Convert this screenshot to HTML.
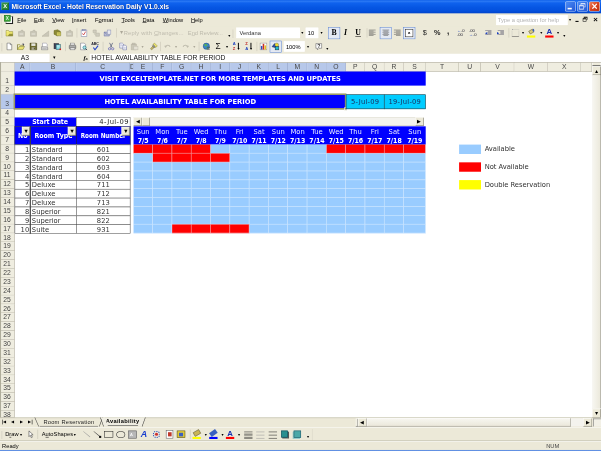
<!DOCTYPE html><html><head><meta charset="utf-8"><title>Microsoft Excel - Hotel Reservation Daily V1.0.xls</title><style>
*{box-sizing:border-box;margin:0;padding:0}
html,body{width:601px;height:451px;overflow:hidden;background:#ECE9D8}
#root{position:absolute;left:0;top:0;width:1152px;height:864px;transform-origin:0 0;transform:scale(0.52170,0.52199);background:#ECE9D8;overflow:hidden;font-family:"Liberation Sans",sans-serif;font-size:11px;color:#000;filter:blur(0.5px)}
#root div{position:absolute;white-space:nowrap}
.v{font-family:"DejaVu Sans","Liberation Sans",sans-serif}
.w{color:#fff}
.b{font-weight:bold}
.c{text-align:center}
.r{text-align:right}
.ch{background:#EFEDE0;border-right:1px solid #ACA899;border-bottom:1px solid #ACA899;text-align:center;font-size:13px;line-height:16px;color:#444}
.chs{background:#B7C8EA;border-right:1px solid #8C9DC4;border-bottom:1px solid #8C9DC4}
.rh{background:#EFEDE0;border-right:1px solid #ACA899;border-bottom:1px solid #ACA899;text-align:center;font-size:13px;color:#444}
.rhs{background:#B7C8EA;border-bottom:1px solid #8C9DC4}
.sep{width:1px;height:18px;background:#C5C2B2}
.grip{width:3px;height:18px;border-left:1px dotted #A6A398;}
.dd{font-size:7px;line-height:7px;color:#000}
.ic{width:16px;height:16px}
</style></head><body><div id="root">
<div style="left:0px;top:0px;width:1152px;height:26px;background:linear-gradient(#0A5CE8 0%,#2D7BF5 8%,#0F62EE 22%,#0656E3 55%,#0450DD 80%,#0042C8 100%)"></div>
<div style="left:3px;top:5px;width:14px;height:14px;background:#2B8A38;border:1px solid #8CCB95;border-right-color:#1B5E26;border-bottom-color:#1B5E26"></div>
<div style="left:3px;top:5px;width:14px;height:14px;color:#fff;font-weight:bold;font-size:11px;line-height:14px;text-align:center">X</div>
<div style="left:22px;top:5px;width:400px;height:16px;color:#fff;font-weight:bold;font-size:13px;line-height:16px;font-family:'Liberation Sans',sans-serif;letter-spacing:-0.06px;text-shadow:1px 1px 0 #0A2A80">Microsoft Excel - Hotel Reservation Daily V1.0.xls</div>
<div style="left:1083px;top:3px;width:21px;height:19px;background:linear-gradient(135deg,#4C8DF5,#2358D8);border:1px solid rgba(255,255,255,0.75);border-radius:3px"></div>
<div style="left:1088px;top:15px;width:8px;height:3px;background:#fff"></div>
<div style="left:1106px;top:3px;width:21px;height:19px;background:linear-gradient(135deg,#4C8DF5,#2358D8);border:1px solid rgba(255,255,255,0.75);border-radius:3px"></div>
<div style="left:1113px;top:6px;width:9px;height:8px;border:1px solid #fff;border-top:2px solid #fff"></div><div style="left:1110px;top:10px;width:9px;height:8px;border:1px solid #fff;border-top:2px solid #fff;background:#2F66DE"></div>
<div style="left:1129px;top:3px;width:21px;height:19px;background:linear-gradient(135deg,#EE8866,#D8431F 50%,#C03010);border:1px solid rgba(255,255,255,0.75);border-radius:3px"></div>
<div style="left:1129px;top:3px;width:21px;height:19px;color:#fff;font-weight:bold;font-size:20px;line-height:18px;text-align:center">&#215;</div>
<div style="left:0px;top:26px;width:1152px;height:24px;background:#ECE9D8"></div>
<div style="left:2px;top:30px;width:3px;height:17px;border-left:1px dotted #A6A398"></div>
<div style="left:11px;top:31px;width:14px;height:15px;background:#fff;border:1px solid #666;border-right:2px solid #222;border-bottom:2px solid #222"></div>
<div style="left:8px;top:29px;width:12px;height:12px;background:#3DA83D;border:1px solid #1C6E1C"></div>
<div style="left:8px;top:29px;width:12px;height:12px;color:#DFF5DF;font-weight:bold;font-size:9px;line-height:12px;text-align:center">X</div>
<div style="left:33px;top:31px;width:60px;height:15px;font-size:11px;line-height:15px"><u>F</u>ile</div>
<div style="left:65px;top:31px;width:60px;height:15px;font-size:11px;line-height:15px"><u>E</u>dit</div>
<div style="left:100px;top:31px;width:60px;height:15px;font-size:11px;line-height:15px"><u>V</u>iew</div>
<div style="left:138px;top:31px;width:60px;height:15px;font-size:11px;line-height:15px"><u>I</u>nsert</div>
<div style="left:182px;top:31px;width:60px;height:15px;font-size:11px;line-height:15px">F<u>o</u>rmat</div>
<div style="left:233px;top:31px;width:60px;height:15px;font-size:11px;line-height:15px"><u>T</u>ools</div>
<div style="left:273px;top:31px;width:60px;height:15px;font-size:11px;line-height:15px"><u>D</u>ata</div>
<div style="left:312px;top:31px;width:60px;height:15px;font-size:11px;line-height:15px"><u>W</u>indow</div>
<div style="left:366px;top:31px;width:60px;height:15px;font-size:11px;line-height:15px"><u>H</u>elp</div>
<div style="left:951px;top:29px;width:137px;height:19px;background:#fff;border:1px solid #fff;color:#B4B4B4;font-size:11px;line-height:17px;padding-left:2px">Type a question for help</div>
<div style="left:1089px;top:34px;width:8px;height:8px;font-size:7px;line-height:8px">&#9660;</div>
<div style="left:1103px;top:40px;width:6px;height:2px;background:#000"></div>
<div style="left:1119px;top:32px;width:7px;height:6px;border:1px solid #000;border-top:2px solid #000"></div>
<div style="left:1117px;top:35px;width:7px;height:6px;border:1px solid #000;border-top:2px solid #000;background:#ECE9D8"></div>
<div style="left:1137px;top:29px;width:14px;height:16px;font-size:15px;line-height:16px;font-weight:bold">&#215;</div>
<div style="left:0px;top:50px;width:1152px;height:26px;background:#ECE9D8"></div>
<div class="grip" style="left:3px;top:54px;width:3px;height:18px;"></div>
<svg style="position:absolute;left:10px;top:55px" width="16" height="16" viewBox="0 0 16 16"><path d="M1.5 3.5h5l1 2h7v8.5h-13z" fill="#F0E870" stroke="#8C8A36"/><path d="M8 9.5h6.5v4.5H5z" fill="#85832F" opacity=".85"/><path d="M2.5 5h4" stroke="#FFFBC0"/></svg>
<svg style="position:absolute;left:33px;top:55px" width="16" height="16" viewBox="0 0 16 16"><path d="M2.500 5.500h4l1-2.500h3.500v2.500h3v9h-11.500z" fill="#CAC7B8" stroke="#B3B0A1"/><path d="M4.500 8.500h7v3h-7z" fill="#DEDBCF"/></svg>
<svg style="position:absolute;left:56px;top:55px" width="16" height="16" viewBox="0 0 16 16"><path d="M2.500 5.500h4l1-2.500h3.500v2.500h3v9h-11.500z" fill="#CAC7B8" stroke="#B3B0A1"/><path d="M4.500 8.500h7v3h-7z" fill="#DEDBCF"/></svg>
<svg style="position:absolute;left:79px;top:55px" width="16" height="16" viewBox="0 0 16 16"><path d="M1.500 14.500L14.500 4.500v10z" fill="#CAC7B8" stroke="#B3B0A1"/></svg>
<svg style="position:absolute;left:102px;top:55px" width="16" height="16" viewBox="0 0 16 16"><path d="M1.500 3.500l7-1.500 5 3v6l-6 2.500-6-3z" fill="#8C8A36" stroke="#6E6C28"/><path d="M6.500 6.500h8v7h-8z" fill="#F0E870" stroke="#6E6C28"/><path d="M8 8.500h5M8 10.500h5" stroke="#8C8A36"/></svg>
<svg style="position:absolute;left:125px;top:55px" width="16" height="16" viewBox="0 0 16 16"><path d="M2.500 5.500h4l1-2.500h3.500v2.500h3v9h-11.500z" fill="#CAC7B8" stroke="#B3B0A1"/><path d="M4.500 8.500h7v3h-7z" fill="#DEDBCF"/></svg>
<div class="sep" style="left:147px;top:54px;width:1px;height:18px;"></div>
<svg style="position:absolute;left:153px;top:55px" width="16" height="16" viewBox="0 0 16 16"><rect x="2.500" y="2.500" width="11" height="12" fill="#fff" stroke="#7880A8"/><rect x="5.500" y="1.500" width="5" height="2.500" fill="#B8BCD0" stroke="#7880A8"/><path d="M5 9l2.200 3 4-6.500" stroke="#C83030" stroke-width="1.500" fill="none"/></svg>
<svg style="position:absolute;left:176px;top:55px" width="16" height="16" viewBox="0 0 16 16"><path d="M2.500 2.500h6v5h-6zM7.500 8.500h7v6h-7z" fill="#D0CDBF" stroke="#B3B0A1"/><path d="M5 8v3h2" stroke="#BDBAAB" fill="none"/></svg>
<svg style="position:absolute;left:198px;top:55px" width="16" height="16" viewBox="0 0 16 16"><path d="M1.500 6.500h10v7.500h-10z" fill="#B8BCD4" stroke="#6870A0"/><path d="M1.500 6.500l5 4 5-4" fill="none" stroke="#6870A0"/><rect x="7.500" y="2.500" width="7" height="8" fill="#E8E8F0" stroke="#8890B0"/></svg>
<div class="sep" style="left:223px;top:54px;width:1px;height:18px;"></div>
<div style="left:228px;top:56px;width:10px;height:14px;font-size:10px;line-height:14px;color:#ACA899">&#9660;</div>
<div style="left:237px;top:56px;width:120px;height:15px;font-size:11px;line-height:15px;color:#BDBAAC;letter-spacing:0.4px">Reply with <u>C</u>hanges...</div>
<div style="left:360px;top:56px;width:80px;height:15px;font-size:11px;line-height:15px;color:#BDBAAC">E<u>n</u>d Review...</div>
<div style="left:436px;top:64px;width:7px;height:7px;font-size:7px;line-height:7px;color:#000">&#9660;</div>
<div class="grip" style="left:446px;top:54px;width:3px;height:18px;"></div>
<div style="left:453px;top:53px;width:122px;height:20px;background:#fff;border:1px solid #fff;font-size:11px;line-height:18px;padding-left:5px;color:#333">Verdana</div>
<div style="left:576px;top:60px;width:7px;height:7px;font-size:7px;line-height:7px;color:#000">&#9660;</div>
<div style="left:586px;top:53px;width:24px;height:20px;background:#fff;border:1px solid #fff;font-size:11px;line-height:18px;padding-left:3px">10</div>
<div style="left:613px;top:60px;width:7px;height:7px;font-size:7px;line-height:7px;color:#000">&#9660;</div>
<div style="left:629px;top:52px;width:23px;height:23px;background:#E4E9F3;border:1px solid #5F86CF"></div>
<div style="left:629px;top:52px;width:23px;height:23px;font-family:'Liberation Serif',serif;font-weight:bold;font-size:15px;line-height:22px;text-align:center">B</div>
<div style="left:651px;top:52px;width:23px;height:23px;font-family:'Liberation Serif',serif;font-style:italic;font-weight:bold;font-size:15px;line-height:22px;text-align:center">I</div>
<div style="left:675px;top:52px;width:23px;height:23px;font-family:'Liberation Serif',serif;font-weight:bold;font-size:15px;line-height:22px;text-align:center;text-decoration:underline">U</div>
<div class="sep" style="left:703px;top:54px;width:1px;height:18px;"></div>
<div style="left:707px;top:57px;width:13px;height:1px;background:#555"></div>
<div style="left:707px;top:59px;width:9px;height:1px;background:#555"></div>
<div style="left:707px;top:61px;width:13px;height:1px;background:#555"></div>
<div style="left:707px;top:63px;width:9px;height:1px;background:#555"></div>
<div style="left:707px;top:65px;width:13px;height:1px;background:#555"></div>
<div style="left:707px;top:67px;width:9px;height:1px;background:#555"></div>
<div style="left:728px;top:52px;width:23px;height:23px;background:#E4E9F3;border:1px solid #5F86CF"></div>
<div style="left:733px;top:57px;width:13px;height:1px;background:#555"></div>
<div style="left:735px;top:59px;width:9px;height:1px;background:#555"></div>
<div style="left:733px;top:61px;width:13px;height:1px;background:#555"></div>
<div style="left:735px;top:63px;width:9px;height:1px;background:#555"></div>
<div style="left:733px;top:65px;width:13px;height:1px;background:#555"></div>
<div style="left:735px;top:67px;width:9px;height:1px;background:#555"></div>
<div style="left:755px;top:57px;width:13px;height:1px;background:#555"></div>
<div style="left:759px;top:59px;width:9px;height:1px;background:#555"></div>
<div style="left:755px;top:61px;width:13px;height:1px;background:#555"></div>
<div style="left:759px;top:63px;width:9px;height:1px;background:#555"></div>
<div style="left:755px;top:65px;width:13px;height:1px;background:#555"></div>
<div style="left:759px;top:67px;width:9px;height:1px;background:#555"></div>
<div style="left:773px;top:52px;width:23px;height:23px;background:#E4E9F3;border:1px solid #5F86CF"></div>
<div style="left:777px;top:56px;width:15px;height:15px;border:1px solid #222;background:#fff"></div>
<div style="left:780px;top:61px;width:9px;height:5px;font-size:8px;line-height:5px;font-weight:bold;text-align:center">a</div>
<div style="left:806px;top:54px;width:16px;height:18px;font-size:14px;line-height:18px;text-align:center;color:#222">$</div>
<div style="left:828px;top:54px;width:20px;height:18px;font-size:14px;line-height:18px;font-weight:bold;text-align:center;color:#222">%</div>
<div style="left:857px;top:52px;width:10px;height:18px;font-size:16px;line-height:18px;font-weight:bold;color:#222">,</div>
<div style="left:876px;top:55px;width:20px;height:16px;font-size:8px;line-height:8px;color:#223"><span style="color:#1A3FBF">&#8592;</span>.0<br>.00</div>
<div style="left:899px;top:55px;width:20px;height:16px;font-size:8px;line-height:8px;color:#223">.00<br><span style="color:#1A3FBF">&#8594;</span>.0</div>
<div style="left:930px;top:58px;width:12px;height:1px;background:#667"></div>
<div style="left:935px;top:60px;width:7px;height:1px;background:#667"></div>
<div style="left:935px;top:62px;width:7px;height:1px;background:#667"></div>
<div style="left:935px;top:64px;width:7px;height:1px;background:#667"></div>
<div style="left:930px;top:66px;width:12px;height:1px;background:#667"></div>
<div style="left:929px;top:60px;width:5px;height:6px;font-size:6px;line-height:6px;color:#1A3FBF">&#9664;</div>
<div style="left:954px;top:58px;width:12px;height:1px;background:#667"></div>
<div style="left:959px;top:60px;width:7px;height:1px;background:#667"></div>
<div style="left:959px;top:62px;width:7px;height:1px;background:#667"></div>
<div style="left:959px;top:64px;width:7px;height:1px;background:#667"></div>
<div style="left:954px;top:66px;width:12px;height:1px;background:#667"></div>
<div style="left:953px;top:60px;width:5px;height:6px;font-size:6px;line-height:6px;color:#1A3FBF">&#9654;</div>
<div class="sep" style="left:975px;top:54px;width:1px;height:18px;"></div>
<div style="left:981px;top:56px;width:14px;height:14px;border:1px dotted #AAA;border-bottom:1px solid #444"></div>
<div style="left:999px;top:60px;width:7px;height:7px;font-size:7px;line-height:7px;color:#000">&#9660;</div>
<div style="left:1014px;top:57px;width:9px;height:7px;background:#D8C878;border:1px solid #665;transform:rotate(-30deg)"></div>
<div style="left:1021px;top:55px;width:3px;height:6px;background:#3A5FBF;border-radius:50%"></div>
<div style="left:1010px;top:68px;width:16px;height:4px;background:#FFFF00"></div>
<div style="left:1034px;top:60px;width:7px;height:7px;font-size:7px;line-height:7px;color:#000">&#9660;</div>
<div style="left:1044px;top:52px;width:18px;height:18px;font-size:15px;line-height:17px;font-weight:bold;text-align:center;color:#1A2FAF">A</div>
<div style="left:1045px;top:68px;width:16px;height:4px;background:#FF0000"></div>
<div style="left:1066px;top:60px;width:7px;height:7px;font-size:7px;line-height:7px;color:#000">&#9660;</div>
<div style="left:1078px;top:64px;width:7px;height:7px;font-size:7px;line-height:7px;color:#000">&#9660;</div>
<div style="left:0px;top:76px;width:1152px;height:26px;background:#ECE9D8"></div>
<div class="grip" style="left:3px;top:80px;width:3px;height:18px;"></div>
<svg style="position:absolute;left:10px;top:81px" width="16" height="16" viewBox="0 0 16 16"><path d="M3.500 1.500h6l3 3v10h-9z" fill="#fff" stroke="#555"/><path d="M9.500 1.500v3h3" fill="#DDD" stroke="#555"/></svg>
<svg style="position:absolute;left:32px;top:81px" width="16" height="16" viewBox="0 0 16 16"><path d="M1.5 4.5h4.5l1 1.5h6v2" fill="#E8E070" stroke="#7E7C30"/><path d="M1.5 4.5v9.5h10.5l3-6H5l-3.5 6z" fill="#E8E070" stroke="#7E7C30"/><path d="M10 3.5c2-2 4-1 4 1l1-.5-1.5 2.5-2-2 1 .3c0-1-1-1.6-2.500-.3z" fill="#445"/></svg>
<svg style="position:absolute;left:56px;top:81px" width="16" height="16" viewBox="0 0 16 16"><path d="M1.500 1.500h12l1 1v12h-13z" fill="#6C6A2C" stroke="#3C3A18"/><rect x="4" y="2" width="8" height="5" fill="#E4E4DC"/><rect x="4.500" y="9.500" width="7" height="5" fill="#A8A690"/><rect x="9" y="10.500" width="1.500" height="3" fill="#3C3A18"/></svg>
<svg style="position:absolute;left:78px;top:81px" width="16" height="16" viewBox="0 0 16 16"><path d="M3.500 1.500h7l2 2v8h-9z" fill="#fff" stroke="#889"/><path d="M1.500 8.500h9l3 2v4h-12z" fill="#D8D8D8" stroke="#777"/><path d="M3 11.500h8" stroke="#999"/></svg>
<svg style="position:absolute;left:102px;top:81px" width="16" height="16" viewBox="0 0 16 16"><rect x="1.500" y="2.500" width="9" height="10" fill="#445" stroke="#223"/><rect x="5.500" y="4.500" width="8" height="9" fill="#7FD8E0" stroke="#256"/><path d="M7 7h5M7 9h5" stroke="#fff"/><rect x="12" y="12" width="3" height="3" fill="#D02020"/></svg>
<div class="sep" style="left:125px;top:80px;width:1px;height:18px;"></div>
<svg style="position:absolute;left:131px;top:81px" width="16" height="16" viewBox="0 0 16 16"><rect x="4.500" y="1.500" width="7" height="5" fill="#F4F4F4" stroke="#777"/><rect x="1.500" y="5.500" width="13" height="7" rx="1.500" fill="#9C9C9C" stroke="#5C5C5C"/><rect x="3.500" y="10.500" width="9" height="4" fill="#E4E4E4" stroke="#777"/><path d="M3 7.500h10" stroke="#C8C8C8"/></svg>
<svg style="position:absolute;left:152px;top:81px" width="16" height="16" viewBox="0 0 16 16"><path d="M2.500 1.500h7l2.500 2.500v10.500h-9.500z" fill="#fff" stroke="#667"/><circle cx="10" cy="10" r="3" fill="#A8E4E8" stroke="#2A7A8A" stroke-width="1.300"/><path d="M12.300 12.300l2.700 2.700" stroke="#345" stroke-width="1.800"/></svg>
<div style="left:175px;top:80px;width:16px;height:9px;font-size:7px;line-height:9px;font-weight:bold;color:#223;letter-spacing:-0.3px">ABC</div>
<svg style="position:absolute;left:175px;top:81px" width="16" height="16" viewBox="0 0 16 16"><path d="M4 10l3 4.500 6-8" stroke="#2A4AC8" stroke-width="2.200" fill="none"/></svg>
<div class="sep" style="left:197px;top:80px;width:1px;height:18px;"></div>
<svg style="position:absolute;left:205px;top:81px" width="16" height="16" viewBox="0 0 16 16"><path d="M5 1l4.500 9M11 1L6.500 10" stroke="#505878" stroke-width="1.400" fill="none"/><circle cx="5" cy="12.500" r="2.200" fill="none" stroke="#6C6CB8" stroke-width="1.500"/><circle cx="11" cy="12.500" r="2.200" fill="none" stroke="#6C6CB8" stroke-width="1.500"/></svg>
<svg style="position:absolute;left:228px;top:81px" width="16" height="16" viewBox="0 0 16 16"><path d="M1.500 1.500h5l2 2v7.500h-7z" fill="#fff" stroke="#5A64A0"/><path d="M7.500 5.500h5l2 2v7h-7z" fill="#fff" stroke="#5A64A0"/><path d="M3 5h3.500M3 7h3M9 9.500h4M9 11.500h4" stroke="#98A0C8"/></svg>
<svg style="position:absolute;left:250px;top:81px" width="16" height="16" viewBox="0 0 16 16"><path d="M1.500 3.500h10v11h-10z" fill="#CAC7B8" stroke="#B3B0A1"/><rect x="4" y="1.500" width="5" height="3" fill="#C8C5B7" stroke="#B5B2A3"/><rect x="6.500" y="7.500" width="8" height="7" fill="#E4E1D5" stroke="#BDBAAB"/></svg>
<div style="left:270px;top:86px;width:7px;height:7px;font-size:7px;line-height:7px;color:#ACA899">&#9660;</div>
<svg style="position:absolute;left:287px;top:81px" width="16" height="16" viewBox="0 0 16 16"><path d="M9 1.500l5.500 5.500-3 3-5.500-5.500z" fill="#F0E870" stroke="#8C8A36"/><path d="M7 5l3.500 3.500-2 2L5 7z" fill="#9A9A9A" stroke="#555"/><path d="M5.500 8l2.500 2.500-4.500 4-2-2z" fill="#C8B870" stroke="#6E6C28"/></svg>
<div class="sep" style="left:307px;top:80px;width:1px;height:18px;"></div>
<svg style="position:absolute;left:313px;top:81px" width="16" height="16" viewBox="0 0 16 16"><path d="M4 9c0-4 8-5 9 0" fill="none" stroke="#C0BDAE" stroke-width="2"/><path d="M1.500 6.500l3 4.500 2.500-4z" fill="#C0BDAE"/></svg>
<div style="left:334px;top:86px;width:7px;height:7px;font-size:7px;line-height:7px;color:#ACA899">&#9660;</div>
<svg style="position:absolute;left:348px;top:81px" width="16" height="16" viewBox="0 0 16 16"><path d="M12 9c0-4-8-5-9 0" fill="none" stroke="#C0BDAE" stroke-width="2"/><path d="M14.500 6.500l-3 4.500-2.500-4z" fill="#C0BDAE"/></svg>
<div style="left:369px;top:86px;width:7px;height:7px;font-size:7px;line-height:7px;color:#ACA899">&#9660;</div>
<div class="sep" style="left:381px;top:80px;width:1px;height:18px;"></div>
<svg style="position:absolute;left:388px;top:81px" width="16" height="16" viewBox="0 0 16 16"><circle cx="7.500" cy="7.500" r="6" fill="#3C86C6" stroke="#1D4E86"/><path d="M4 4c2-1.500 4-1 5 .5s-1 3-3 3-3-2-2-3.500zM8 9.500c1.500-.5 3 0 3 1.500s-2 2-3 1z" fill="#58B058"/><path d="M8.500 10.500c2-1.500 4-1.500 6 0M8.500 12.500c2 1.500 4 1.500 6 0" stroke="#444" stroke-width="1.400" fill="none"/></svg>
<div style="left:410px;top:80px;width:16px;height:18px;font-size:16px;line-height:18px;text-align:center;color:#111">&#931;</div>
<div style="left:432px;top:86px;width:7px;height:7px;font-size:7px;line-height:7px;color:#000">&#9660;</div>
<div style="left:446px;top:80px;width:8px;height:9px;font-size:8px;line-height:9px;font-weight:bold;color:#1A3FBF">A</div>
<div style="left:446px;top:88px;width:8px;height:9px;font-size:8px;line-height:9px;font-weight:bold;color:#B22">Z</div>
<div style="left:456px;top:82px;width:2px;height:11px;background:#111"></div>
<div style="left:454px;top:91px;width:6px;height:5px;font-size:7px;line-height:5px">&#9660;</div>
<div style="left:470px;top:80px;width:8px;height:9px;font-size:8px;line-height:9px;font-weight:bold;color:#B22">Z</div>
<div style="left:470px;top:88px;width:8px;height:9px;font-size:8px;line-height:9px;font-weight:bold;color:#1A3FBF">A</div>
<div style="left:480px;top:82px;width:2px;height:11px;background:#111"></div>
<div style="left:478px;top:91px;width:6px;height:5px;font-size:7px;line-height:5px">&#9660;</div>
<div class="sep" style="left:492px;top:80px;width:1px;height:18px;"></div>
<svg style="position:absolute;left:497px;top:81px" width="16" height="16" viewBox="0 0 16 16"><rect x="1.500" y="1.500" width="13" height="13" fill="#fff" stroke="#888"/><rect x="3" y="7" width="3" height="7" fill="#2A4FBF"/><rect x="6.500" y="3" width="3" height="11" fill="#C83028"/><rect x="10" y="6" width="3" height="8" fill="#E8C020"/></svg>
<div style="left:517px;top:78px;width:23px;height:23px;background:#E4E9F3;border:1px solid #5F86CF"></div>
<svg style="position:absolute;left:520px;top:81px" width="16" height="16" viewBox="0 0 16 16"><path d="M1.500 8.500l5-6 3 8z" fill="#2A4FBF" stroke="#123"/><circle cx="10.500" cy="5" r="3.500" fill="#F0E030" stroke="#776"/><rect x="7.500" y="8.500" width="7" height="6" fill="#20B8C8" stroke="#134"/></svg>
<div style="left:544px;top:79px;width:40px;height:20px;background:#fff;border:1px solid #fff;font-size:11px;line-height:18px;padding-left:3px">100%</div>
<div style="left:587px;top:86px;width:7px;height:7px;font-size:7px;line-height:7px;color:#000">&#9660;</div>
<svg style="position:absolute;left:603px;top:81px" width="16" height="16" viewBox="0 0 16 16"><path d="M2.500 2.500h11v9h-5l-3 3v-3h-3z" fill="#fff" stroke="#555"/></svg>
<div style="left:604px;top:81px;width:14px;height:13px;font-size:10px;line-height:13px;font-weight:bold;text-align:center;color:#333">?</div>
<div style="left:624px;top:90px;width:7px;height:7px;font-size:7px;line-height:7px;color:#000">&#9660;</div>
<div style="left:0px;top:102px;width:1152px;height:18px;background:#ECE9D8"></div>
<div style="left:0px;top:103px;width:95px;height:16px;background:#fff;text-align:center;font-size:13px;line-height:15px;color:#111">A3</div>
<div style="left:100px;top:107px;width:9px;height:8px;font-size:8px;line-height:8px">&#9660;</div>
<div style="left:160px;top:103px;width:14px;height:16px;font-family:'Liberation Serif',serif;font-style:italic;font-weight:bold;font-size:12px;line-height:15px">f<span style="font-size:9px">x</span></div>
<div style="left:172px;top:103px;width:980px;height:16px;background:#fff;font-size:13px;line-height:15px;padding-left:3px;color:#111">HOTEL AVAILABILITY TABLE FOR PERIOD</div>
<div style="left:0px;top:120px;width:1135px;height:680px;background:#fff"></div>
<div class="ch" style="left:0px;top:120px;width:28px;height:17px;"></div>
<div class="ch chs" style="left:28px;top:120px;width:30px;height:17px;overflow:hidden">A</div>
<div class="ch chs" style="left:58px;top:120px;width:88px;height:17px;overflow:hidden">B</div>
<div class="ch chs" style="left:146px;top:120px;width:103px;height:17px;overflow:hidden">C</div>
<div class="ch chs" style="left:249px;top:120px;width:7px;height:17px;overflow:hidden">D</div>
<div class="ch chs" style="left:256px;top:120px;width:37px;height:17px;overflow:hidden">E</div>
<div class="ch chs" style="left:293px;top:120px;width:37px;height:17px;overflow:hidden">F</div>
<div class="ch chs" style="left:330px;top:120px;width:37px;height:17px;overflow:hidden">G</div>
<div class="ch chs" style="left:367px;top:120px;width:37px;height:17px;overflow:hidden">H</div>
<div class="ch chs" style="left:404px;top:120px;width:37px;height:17px;overflow:hidden">I</div>
<div class="ch chs" style="left:441px;top:120px;width:37px;height:17px;overflow:hidden">J</div>
<div class="ch chs" style="left:478px;top:120px;width:37px;height:17px;overflow:hidden">K</div>
<div class="ch chs" style="left:515px;top:120px;width:37px;height:17px;overflow:hidden">L</div>
<div class="ch chs" style="left:552px;top:120px;width:37px;height:17px;overflow:hidden">M</div>
<div class="ch chs" style="left:589px;top:120px;width:37px;height:17px;overflow:hidden">N</div>
<div class="ch chs" style="left:626px;top:120px;width:37px;height:17px;overflow:hidden">O</div>
<div class="ch" style="left:663px;top:120px;width:37px;height:17px;overflow:hidden">P</div>
<div class="ch" style="left:700px;top:120px;width:37px;height:17px;overflow:hidden">Q</div>
<div class="ch" style="left:737px;top:120px;width:37px;height:17px;overflow:hidden">R</div>
<div class="ch" style="left:774px;top:120px;width:42px;height:17px;overflow:hidden">S</div>
<div class="ch" style="left:816px;top:120px;width:64px;height:17px;overflow:hidden">T</div>
<div class="ch" style="left:880px;top:120px;width:42px;height:17px;overflow:hidden">U</div>
<div class="ch" style="left:922px;top:120px;width:64px;height:17px;overflow:hidden">V</div>
<div class="ch" style="left:986px;top:120px;width:64px;height:17px;overflow:hidden">W</div>
<div class="ch" style="left:1050px;top:120px;width:64px;height:17px;overflow:hidden">X</div>
<div class="ch" style="left:1114px;top:120px;width:21px;height:17px;overflow:hidden"></div>
<div class="rh" style="left:0px;top:137px;width:28px;height:27px;line-height:36px;overflow:hidden">1</div>
<div class="rh" style="left:0px;top:164px;width:28px;height:17px;line-height:16px;overflow:hidden">2</div>
<div class="rh rhs" style="left:0px;top:181px;width:28px;height:28px;line-height:38px;overflow:hidden">3</div>
<div class="rh" style="left:0px;top:209px;width:28px;height:16px;line-height:14px;overflow:hidden">4</div>
<div class="rh" style="left:0px;top:225px;width:28px;height:17px;line-height:16px;overflow:hidden">5</div>
<div class="rh" style="left:0px;top:242px;width:28px;height:18px;line-height:18px;overflow:hidden">6</div>
<div class="rh" style="left:0px;top:260px;width:28px;height:17px;line-height:16px;overflow:hidden">7</div>
<div class="rh" style="left:0px;top:277px;width:28px;height:17px;line-height:16px;overflow:hidden">8</div>
<div class="rh" style="left:0px;top:294px;width:28px;height:17px;line-height:16px;overflow:hidden">9</div>
<div class="rh" style="left:0px;top:311px;width:28px;height:17px;line-height:16px;overflow:hidden">10</div>
<div class="rh" style="left:0px;top:328px;width:28px;height:17px;line-height:16px;overflow:hidden">11</div>
<div class="rh" style="left:0px;top:345px;width:28px;height:17px;line-height:16px;overflow:hidden">12</div>
<div class="rh" style="left:0px;top:362px;width:28px;height:17px;line-height:16px;overflow:hidden">13</div>
<div class="rh" style="left:0px;top:379px;width:28px;height:17px;line-height:16px;overflow:hidden">14</div>
<div class="rh" style="left:0px;top:396px;width:28px;height:17px;line-height:16px;overflow:hidden">15</div>
<div class="rh" style="left:0px;top:413px;width:28px;height:17px;line-height:16px;overflow:hidden">16</div>
<div class="rh" style="left:0px;top:430px;width:28px;height:17px;line-height:16px;overflow:hidden">17</div>
<div class="rh" style="left:0px;top:447px;width:28px;height:17px;line-height:16px;overflow:hidden">18</div>
<div class="rh" style="left:0px;top:464px;width:28px;height:17px;line-height:16px;overflow:hidden">19</div>
<div class="rh" style="left:0px;top:481px;width:28px;height:17px;line-height:16px;overflow:hidden">20</div>
<div class="rh" style="left:0px;top:498px;width:28px;height:17px;line-height:16px;overflow:hidden">21</div>
<div class="rh" style="left:0px;top:515px;width:28px;height:17px;line-height:16px;overflow:hidden">22</div>
<div class="rh" style="left:0px;top:532px;width:28px;height:17px;line-height:16px;overflow:hidden">23</div>
<div class="rh" style="left:0px;top:549px;width:28px;height:17px;line-height:16px;overflow:hidden">24</div>
<div class="rh" style="left:0px;top:566px;width:28px;height:17px;line-height:16px;overflow:hidden">25</div>
<div class="rh" style="left:0px;top:583px;width:28px;height:17px;line-height:16px;overflow:hidden">26</div>
<div class="rh" style="left:0px;top:600px;width:28px;height:17px;line-height:16px;overflow:hidden">27</div>
<div class="rh" style="left:0px;top:617px;width:28px;height:17px;line-height:16px;overflow:hidden">28</div>
<div class="rh" style="left:0px;top:634px;width:28px;height:17px;line-height:16px;overflow:hidden">29</div>
<div class="rh" style="left:0px;top:651px;width:28px;height:17px;line-height:16px;overflow:hidden">30</div>
<div class="rh" style="left:0px;top:668px;width:28px;height:17px;line-height:16px;overflow:hidden">31</div>
<div class="rh" style="left:0px;top:685px;width:28px;height:17px;line-height:16px;overflow:hidden">32</div>
<div class="rh" style="left:0px;top:702px;width:28px;height:17px;line-height:16px;overflow:hidden">33</div>
<div class="rh" style="left:0px;top:719px;width:28px;height:17px;line-height:16px;overflow:hidden">34</div>
<div class="rh" style="left:0px;top:736px;width:28px;height:17px;line-height:16px;overflow:hidden">35</div>
<div class="rh" style="left:0px;top:753px;width:28px;height:17px;line-height:16px;overflow:hidden">36</div>
<div class="rh" style="left:0px;top:770px;width:28px;height:17px;line-height:16px;overflow:hidden">37</div>
<div class="rh" style="left:0px;top:787px;width:28px;height:13px;line-height:16px;overflow:hidden">38</div>
<div class="v w b c" style="left:28px;top:137px;width:788px;height:27px;background:#0000FF;font-size:13px;line-height:30px;letter-spacing:-0.2px">VISIT EXCELTEMPLATE.NET FOR MORE TEMPLATES AND UPDATES</div>
<div class="v w b c" style="left:28px;top:181px;width:635px;height:28px;background:#0000FF;font-size:13px;line-height:27px;letter-spacing:-0.09px">HOTEL AVAILABILITY TABLE FOR PERIOD</div>
<div style="left:26px;top:179px;width:638px;height:31px;border:3px solid #9A9A62"></div>
<div style="left:660px;top:206px;width:5px;height:5px;background:#9A9A62;border:1px solid #fff"></div>
<div class="v c" style="left:663px;top:181px;width:74px;height:28px;background:#00CCFF;border:1px solid #333;font-size:13px;line-height:26px;letter-spacing:0.45px;color:#1A2A5A">5-Jul-09</div>
<div class="v c" style="left:736px;top:181px;width:80px;height:28px;background:#00CCFF;border:1px solid #333;font-size:13px;line-height:26px;letter-spacing:0.4px;color:#1A2A5A">19-Jul-09</div>
<div class="v w b r" style="left:28px;top:225px;width:118px;height:17px;background:#0000FF;font-size:12px;line-height:18px;letter-spacing:-0.2px;padding-right:16px">Start Date</div>
<div class="v r" style="left:146px;top:225px;width:104px;height:18px;background:#fff;border:1px solid #666;font-size:13px;line-height:15px;padding-right:2px;letter-spacing:0.75px;color:#222">4-Jul-09</div>
<div style="left:256px;top:225px;width:556px;height:16px;background:#F4F3EE;border-top:1px solid #D9D6C8;border-bottom:1px solid #C9C6B8"></div>
<div style="left:256px;top:225px;width:16px;height:16px;background:#ECE9D8;border:1px solid #fff;border-right:1px solid #716F64;border-bottom:1px solid #716F64;font-size:10px;line-height:14px;text-align:center;overflow:hidden">&#9664;</div>
<div style="left:272px;top:225px;width:15px;height:16px;background:#ECE9D8;border:1px solid #fff;border-right:1px solid #716F64;border-bottom:1px solid #716F64;font-size:10px;line-height:14px;text-align:center;overflow:hidden"></div>
<div style="left:796px;top:225px;width:16px;height:16px;background:#ECE9D8;border:1px solid #fff;border-right:1px solid #716F64;border-bottom:1px solid #716F64;font-size:10px;line-height:14px;text-align:center;overflow:hidden">&#9654;</div>
<div class="v w b c" style="left:28px;top:242px;width:31px;height:36px;background:#0000FF;border:1px solid #222;font-size:12px;line-height:34px;letter-spacing:-0.1px;overflow:hidden">No</div>
<div style="left:42px;top:243px;width:16px;height:17px;background:#ECE9D8;border:1px solid #fff;border-right:1px solid #404040;border-bottom:1px solid #404040;box-shadow:inset -1px -1px 0 #ACA899;font-size:11px;line-height:14px;text-align:center;overflow:hidden">&#9660;</div>
<div class="v w b c" style="left:58px;top:242px;width:89px;height:36px;background:#0000FF;border:1px solid #222;font-size:12px;line-height:34px;letter-spacing:-0.1px;overflow:hidden">Room Type</div>
<div style="left:130px;top:243px;width:16px;height:17px;background:#ECE9D8;border:1px solid #fff;border-right:1px solid #404040;border-bottom:1px solid #404040;box-shadow:inset -1px -1px 0 #ACA899;font-size:11px;line-height:14px;text-align:center;overflow:hidden">&#9660;</div>
<div class="v w b c" style="left:146px;top:242px;width:104px;height:36px;background:#0000FF;border:1px solid #222;font-size:12px;line-height:34px;font-family:'DejaVu Sans Condensed','DejaVu Sans',sans-serif;letter-spacing:0px;overflow:hidden">Room Number</div>
<div style="left:233px;top:243px;width:16px;height:17px;background:#ECE9D8;border:1px solid #fff;border-right:1px solid #404040;border-bottom:1px solid #404040;box-shadow:inset -1px -1px 0 #ACA899;font-size:11px;line-height:14px;text-align:center;overflow:hidden">&#9660;</div>
<div style="left:256px;top:242px;width:560px;height:35px;background:#0000FF"></div>
<div class="v c" style="left:252px;top:243px;width:45px;height:17px;font-size:13px;line-height:17px;color:#E8EEFF">Sun</div>
<div class="v w b c" style="left:252px;top:261px;width:45px;height:17px;font-size:12px;line-height:17px;letter-spacing:-0.1px">7/5</div>
<div class="v c" style="left:289px;top:243px;width:45px;height:17px;font-size:13px;line-height:17px;color:#E8EEFF">Mon</div>
<div class="v w b c" style="left:289px;top:261px;width:45px;height:17px;font-size:12px;line-height:17px;letter-spacing:-0.1px">7/6</div>
<div class="v c" style="left:326px;top:243px;width:45px;height:17px;font-size:13px;line-height:17px;color:#E8EEFF">Tue</div>
<div class="v w b c" style="left:326px;top:261px;width:45px;height:17px;font-size:12px;line-height:17px;letter-spacing:-0.1px">7/7</div>
<div class="v c" style="left:363px;top:243px;width:45px;height:17px;font-size:13px;line-height:17px;color:#E8EEFF">Wed</div>
<div class="v w b c" style="left:363px;top:261px;width:45px;height:17px;font-size:12px;line-height:17px;letter-spacing:-0.1px">7/8</div>
<div class="v c" style="left:400px;top:243px;width:45px;height:17px;font-size:13px;line-height:17px;color:#E8EEFF">Thu</div>
<div class="v w b c" style="left:400px;top:261px;width:45px;height:17px;font-size:12px;line-height:17px;letter-spacing:-0.1px">7/9</div>
<div class="v c" style="left:437px;top:243px;width:45px;height:17px;font-size:13px;line-height:17px;color:#E8EEFF">Fri</div>
<div class="v w b c" style="left:437px;top:261px;width:45px;height:17px;font-size:12px;line-height:17px;letter-spacing:-0.1px">7/10</div>
<div class="v c" style="left:474px;top:243px;width:45px;height:17px;font-size:13px;line-height:17px;color:#E8EEFF">Sat</div>
<div class="v w b c" style="left:474px;top:261px;width:45px;height:17px;font-size:12px;line-height:17px;letter-spacing:-0.1px">7/11</div>
<div class="v c" style="left:511px;top:243px;width:45px;height:17px;font-size:13px;line-height:17px;color:#E8EEFF">Sun</div>
<div class="v w b c" style="left:511px;top:261px;width:45px;height:17px;font-size:12px;line-height:17px;letter-spacing:-0.1px">7/12</div>
<div class="v c" style="left:548px;top:243px;width:45px;height:17px;font-size:13px;line-height:17px;color:#E8EEFF">Mon</div>
<div class="v w b c" style="left:548px;top:261px;width:45px;height:17px;font-size:12px;line-height:17px;letter-spacing:-0.1px">7/13</div>
<div class="v c" style="left:585px;top:243px;width:45px;height:17px;font-size:13px;line-height:17px;color:#E8EEFF">Tue</div>
<div class="v w b c" style="left:585px;top:261px;width:45px;height:17px;font-size:12px;line-height:17px;letter-spacing:-0.1px">7/14</div>
<div class="v c" style="left:622px;top:243px;width:45px;height:17px;font-size:13px;line-height:17px;color:#E8EEFF">Wed</div>
<div class="v w b c" style="left:622px;top:261px;width:45px;height:17px;font-size:12px;line-height:17px;letter-spacing:-0.1px">7/15</div>
<div class="v c" style="left:659px;top:243px;width:45px;height:17px;font-size:13px;line-height:17px;color:#E8EEFF">Thu</div>
<div class="v w b c" style="left:659px;top:261px;width:45px;height:17px;font-size:12px;line-height:17px;letter-spacing:-0.1px">7/16</div>
<div class="v c" style="left:696px;top:243px;width:45px;height:17px;font-size:13px;line-height:17px;color:#E8EEFF">Fri</div>
<div class="v w b c" style="left:696px;top:261px;width:45px;height:17px;font-size:12px;line-height:17px;letter-spacing:-0.1px">7/17</div>
<div class="v c" style="left:733px;top:243px;width:45px;height:17px;font-size:13px;line-height:17px;color:#E8EEFF">Sat</div>
<div class="v w b c" style="left:733px;top:261px;width:45px;height:17px;font-size:12px;line-height:17px;letter-spacing:-0.1px">7/18</div>
<div class="v c" style="left:770px;top:243px;width:50px;height:17px;font-size:13px;line-height:17px;color:#E8EEFF">Sun</div>
<div class="v w b c" style="left:770px;top:261px;width:50px;height:17px;font-size:12px;line-height:17px;letter-spacing:-0.1px">7/19</div>
<div class="v r" style="left:28px;top:277px;width:31px;height:18px;border:1px solid #4A4A4A;font-size:13px;line-height:17px;color:#333;background:#fff;padding-right:2px">1</div>
<div class="v" style="left:58px;top:277px;width:89px;height:18px;border:1px solid #4A4A4A;font-size:13px;line-height:17px;color:#333;background:#fff;padding-left:2px">Standard</div>
<div class="v c" style="left:146px;top:277px;width:104px;height:18px;border:1px solid #4A4A4A;font-size:13px;line-height:17px;color:#333;background:#fff;">601</div>
<div style="left:256px;top:277px;width:37px;height:17px;background:#FF0000;border-right:1px solid #E6F2FF;border-bottom:1px solid #E6F2FF"></div>
<div style="left:293px;top:277px;width:37px;height:17px;background:#FF0000;border-right:1px solid #E6F2FF;border-bottom:1px solid #E6F2FF"></div>
<div style="left:330px;top:277px;width:37px;height:17px;background:#FF0000;border-right:1px solid #E6F2FF;border-bottom:1px solid #E6F2FF"></div>
<div style="left:367px;top:277px;width:37px;height:17px;background:#FF0000;border-right:1px solid #E6F2FF;border-bottom:1px solid #E6F2FF"></div>
<div style="left:404px;top:277px;width:37px;height:17px;background:#99CCFF;border-right:1px solid #E6F2FF;border-bottom:1px solid #E6F2FF"></div>
<div style="left:441px;top:277px;width:37px;height:17px;background:#99CCFF;border-right:1px solid #E6F2FF;border-bottom:1px solid #E6F2FF"></div>
<div style="left:478px;top:277px;width:37px;height:17px;background:#99CCFF;border-right:1px solid #E6F2FF;border-bottom:1px solid #E6F2FF"></div>
<div style="left:515px;top:277px;width:37px;height:17px;background:#99CCFF;border-right:1px solid #E6F2FF;border-bottom:1px solid #E6F2FF"></div>
<div style="left:552px;top:277px;width:37px;height:17px;background:#99CCFF;border-right:1px solid #E6F2FF;border-bottom:1px solid #E6F2FF"></div>
<div style="left:589px;top:277px;width:37px;height:17px;background:#99CCFF;border-right:1px solid #E6F2FF;border-bottom:1px solid #E6F2FF"></div>
<div style="left:626px;top:277px;width:37px;height:17px;background:#FF0000;border-right:1px solid #E6F2FF;border-bottom:1px solid #E6F2FF"></div>
<div style="left:663px;top:277px;width:37px;height:17px;background:#FF0000;border-right:1px solid #E6F2FF;border-bottom:1px solid #E6F2FF"></div>
<div style="left:700px;top:277px;width:37px;height:17px;background:#FF0000;border-right:1px solid #E6F2FF;border-bottom:1px solid #E6F2FF"></div>
<div style="left:737px;top:277px;width:37px;height:17px;background:#FF0000;border-right:1px solid #E6F2FF;border-bottom:1px solid #E6F2FF"></div>
<div style="left:774px;top:277px;width:42px;height:17px;background:#FF0000;border-right:1px solid #E6F2FF;border-bottom:1px solid #E6F2FF"></div>
<div class="v r" style="left:28px;top:294px;width:31px;height:18px;border:1px solid #4A4A4A;font-size:13px;line-height:17px;color:#333;background:#fff;padding-right:2px">2</div>
<div class="v" style="left:58px;top:294px;width:89px;height:18px;border:1px solid #4A4A4A;font-size:13px;line-height:17px;color:#333;background:#fff;padding-left:2px">Standard</div>
<div class="v c" style="left:146px;top:294px;width:104px;height:18px;border:1px solid #4A4A4A;font-size:13px;line-height:17px;color:#333;background:#fff;">602</div>
<div style="left:256px;top:294px;width:37px;height:17px;background:#99CCFF;border-right:1px solid #E6F2FF;border-bottom:1px solid #E6F2FF"></div>
<div style="left:293px;top:294px;width:37px;height:17px;background:#FF0000;border-right:1px solid #E6F2FF;border-bottom:1px solid #E6F2FF"></div>
<div style="left:330px;top:294px;width:37px;height:17px;background:#FF0000;border-right:1px solid #E6F2FF;border-bottom:1px solid #E6F2FF"></div>
<div style="left:367px;top:294px;width:37px;height:17px;background:#FF0000;border-right:1px solid #E6F2FF;border-bottom:1px solid #E6F2FF"></div>
<div style="left:404px;top:294px;width:37px;height:17px;background:#FF0000;border-right:1px solid #E6F2FF;border-bottom:1px solid #E6F2FF"></div>
<div style="left:441px;top:294px;width:37px;height:17px;background:#99CCFF;border-right:1px solid #E6F2FF;border-bottom:1px solid #E6F2FF"></div>
<div style="left:478px;top:294px;width:37px;height:17px;background:#99CCFF;border-right:1px solid #E6F2FF;border-bottom:1px solid #E6F2FF"></div>
<div style="left:515px;top:294px;width:37px;height:17px;background:#99CCFF;border-right:1px solid #E6F2FF;border-bottom:1px solid #E6F2FF"></div>
<div style="left:552px;top:294px;width:37px;height:17px;background:#99CCFF;border-right:1px solid #E6F2FF;border-bottom:1px solid #E6F2FF"></div>
<div style="left:589px;top:294px;width:37px;height:17px;background:#99CCFF;border-right:1px solid #E6F2FF;border-bottom:1px solid #E6F2FF"></div>
<div style="left:626px;top:294px;width:37px;height:17px;background:#99CCFF;border-right:1px solid #E6F2FF;border-bottom:1px solid #E6F2FF"></div>
<div style="left:663px;top:294px;width:37px;height:17px;background:#99CCFF;border-right:1px solid #E6F2FF;border-bottom:1px solid #E6F2FF"></div>
<div style="left:700px;top:294px;width:37px;height:17px;background:#99CCFF;border-right:1px solid #E6F2FF;border-bottom:1px solid #E6F2FF"></div>
<div style="left:737px;top:294px;width:37px;height:17px;background:#99CCFF;border-right:1px solid #E6F2FF;border-bottom:1px solid #E6F2FF"></div>
<div style="left:774px;top:294px;width:42px;height:17px;background:#99CCFF;border-right:1px solid #E6F2FF;border-bottom:1px solid #E6F2FF"></div>
<div class="v r" style="left:28px;top:311px;width:31px;height:18px;border:1px solid #4A4A4A;font-size:13px;line-height:17px;color:#333;background:#fff;padding-right:2px">3</div>
<div class="v" style="left:58px;top:311px;width:89px;height:18px;border:1px solid #4A4A4A;font-size:13px;line-height:17px;color:#333;background:#fff;padding-left:2px">Standard</div>
<div class="v c" style="left:146px;top:311px;width:104px;height:18px;border:1px solid #4A4A4A;font-size:13px;line-height:17px;color:#333;background:#fff;">603</div>
<div style="left:256px;top:311px;width:37px;height:17px;background:#99CCFF;border-right:1px solid #E6F2FF;border-bottom:1px solid #E6F2FF"></div>
<div style="left:293px;top:311px;width:37px;height:17px;background:#99CCFF;border-right:1px solid #E6F2FF;border-bottom:1px solid #E6F2FF"></div>
<div style="left:330px;top:311px;width:37px;height:17px;background:#99CCFF;border-right:1px solid #E6F2FF;border-bottom:1px solid #E6F2FF"></div>
<div style="left:367px;top:311px;width:37px;height:17px;background:#99CCFF;border-right:1px solid #E6F2FF;border-bottom:1px solid #E6F2FF"></div>
<div style="left:404px;top:311px;width:37px;height:17px;background:#99CCFF;border-right:1px solid #E6F2FF;border-bottom:1px solid #E6F2FF"></div>
<div style="left:441px;top:311px;width:37px;height:17px;background:#99CCFF;border-right:1px solid #E6F2FF;border-bottom:1px solid #E6F2FF"></div>
<div style="left:478px;top:311px;width:37px;height:17px;background:#99CCFF;border-right:1px solid #E6F2FF;border-bottom:1px solid #E6F2FF"></div>
<div style="left:515px;top:311px;width:37px;height:17px;background:#99CCFF;border-right:1px solid #E6F2FF;border-bottom:1px solid #E6F2FF"></div>
<div style="left:552px;top:311px;width:37px;height:17px;background:#99CCFF;border-right:1px solid #E6F2FF;border-bottom:1px solid #E6F2FF"></div>
<div style="left:589px;top:311px;width:37px;height:17px;background:#99CCFF;border-right:1px solid #E6F2FF;border-bottom:1px solid #E6F2FF"></div>
<div style="left:626px;top:311px;width:37px;height:17px;background:#99CCFF;border-right:1px solid #E6F2FF;border-bottom:1px solid #E6F2FF"></div>
<div style="left:663px;top:311px;width:37px;height:17px;background:#99CCFF;border-right:1px solid #E6F2FF;border-bottom:1px solid #E6F2FF"></div>
<div style="left:700px;top:311px;width:37px;height:17px;background:#99CCFF;border-right:1px solid #E6F2FF;border-bottom:1px solid #E6F2FF"></div>
<div style="left:737px;top:311px;width:37px;height:17px;background:#99CCFF;border-right:1px solid #E6F2FF;border-bottom:1px solid #E6F2FF"></div>
<div style="left:774px;top:311px;width:42px;height:17px;background:#99CCFF;border-right:1px solid #E6F2FF;border-bottom:1px solid #E6F2FF"></div>
<div class="v r" style="left:28px;top:328px;width:31px;height:18px;border:1px solid #4A4A4A;font-size:13px;line-height:17px;color:#333;background:#fff;padding-right:2px">4</div>
<div class="v" style="left:58px;top:328px;width:89px;height:18px;border:1px solid #4A4A4A;font-size:13px;line-height:17px;color:#333;background:#fff;padding-left:2px">Standard</div>
<div class="v c" style="left:146px;top:328px;width:104px;height:18px;border:1px solid #4A4A4A;font-size:13px;line-height:17px;color:#333;background:#fff;">604</div>
<div style="left:256px;top:328px;width:37px;height:17px;background:#99CCFF;border-right:1px solid #E6F2FF;border-bottom:1px solid #E6F2FF"></div>
<div style="left:293px;top:328px;width:37px;height:17px;background:#99CCFF;border-right:1px solid #E6F2FF;border-bottom:1px solid #E6F2FF"></div>
<div style="left:330px;top:328px;width:37px;height:17px;background:#99CCFF;border-right:1px solid #E6F2FF;border-bottom:1px solid #E6F2FF"></div>
<div style="left:367px;top:328px;width:37px;height:17px;background:#99CCFF;border-right:1px solid #E6F2FF;border-bottom:1px solid #E6F2FF"></div>
<div style="left:404px;top:328px;width:37px;height:17px;background:#99CCFF;border-right:1px solid #E6F2FF;border-bottom:1px solid #E6F2FF"></div>
<div style="left:441px;top:328px;width:37px;height:17px;background:#99CCFF;border-right:1px solid #E6F2FF;border-bottom:1px solid #E6F2FF"></div>
<div style="left:478px;top:328px;width:37px;height:17px;background:#99CCFF;border-right:1px solid #E6F2FF;border-bottom:1px solid #E6F2FF"></div>
<div style="left:515px;top:328px;width:37px;height:17px;background:#99CCFF;border-right:1px solid #E6F2FF;border-bottom:1px solid #E6F2FF"></div>
<div style="left:552px;top:328px;width:37px;height:17px;background:#99CCFF;border-right:1px solid #E6F2FF;border-bottom:1px solid #E6F2FF"></div>
<div style="left:589px;top:328px;width:37px;height:17px;background:#99CCFF;border-right:1px solid #E6F2FF;border-bottom:1px solid #E6F2FF"></div>
<div style="left:626px;top:328px;width:37px;height:17px;background:#99CCFF;border-right:1px solid #E6F2FF;border-bottom:1px solid #E6F2FF"></div>
<div style="left:663px;top:328px;width:37px;height:17px;background:#99CCFF;border-right:1px solid #E6F2FF;border-bottom:1px solid #E6F2FF"></div>
<div style="left:700px;top:328px;width:37px;height:17px;background:#99CCFF;border-right:1px solid #E6F2FF;border-bottom:1px solid #E6F2FF"></div>
<div style="left:737px;top:328px;width:37px;height:17px;background:#99CCFF;border-right:1px solid #E6F2FF;border-bottom:1px solid #E6F2FF"></div>
<div style="left:774px;top:328px;width:42px;height:17px;background:#99CCFF;border-right:1px solid #E6F2FF;border-bottom:1px solid #E6F2FF"></div>
<div class="v r" style="left:28px;top:345px;width:31px;height:18px;border:1px solid #4A4A4A;font-size:13px;line-height:17px;color:#333;background:#fff;padding-right:2px">5</div>
<div class="v" style="left:58px;top:345px;width:89px;height:18px;border:1px solid #4A4A4A;font-size:13px;line-height:17px;color:#333;background:#fff;padding-left:2px">Deluxe</div>
<div class="v c" style="left:146px;top:345px;width:104px;height:18px;border:1px solid #4A4A4A;font-size:13px;line-height:17px;color:#333;background:#fff;">711</div>
<div style="left:256px;top:345px;width:37px;height:17px;background:#99CCFF;border-right:1px solid #E6F2FF;border-bottom:1px solid #E6F2FF"></div>
<div style="left:293px;top:345px;width:37px;height:17px;background:#99CCFF;border-right:1px solid #E6F2FF;border-bottom:1px solid #E6F2FF"></div>
<div style="left:330px;top:345px;width:37px;height:17px;background:#99CCFF;border-right:1px solid #E6F2FF;border-bottom:1px solid #E6F2FF"></div>
<div style="left:367px;top:345px;width:37px;height:17px;background:#99CCFF;border-right:1px solid #E6F2FF;border-bottom:1px solid #E6F2FF"></div>
<div style="left:404px;top:345px;width:37px;height:17px;background:#99CCFF;border-right:1px solid #E6F2FF;border-bottom:1px solid #E6F2FF"></div>
<div style="left:441px;top:345px;width:37px;height:17px;background:#99CCFF;border-right:1px solid #E6F2FF;border-bottom:1px solid #E6F2FF"></div>
<div style="left:478px;top:345px;width:37px;height:17px;background:#99CCFF;border-right:1px solid #E6F2FF;border-bottom:1px solid #E6F2FF"></div>
<div style="left:515px;top:345px;width:37px;height:17px;background:#99CCFF;border-right:1px solid #E6F2FF;border-bottom:1px solid #E6F2FF"></div>
<div style="left:552px;top:345px;width:37px;height:17px;background:#99CCFF;border-right:1px solid #E6F2FF;border-bottom:1px solid #E6F2FF"></div>
<div style="left:589px;top:345px;width:37px;height:17px;background:#99CCFF;border-right:1px solid #E6F2FF;border-bottom:1px solid #E6F2FF"></div>
<div style="left:626px;top:345px;width:37px;height:17px;background:#99CCFF;border-right:1px solid #E6F2FF;border-bottom:1px solid #E6F2FF"></div>
<div style="left:663px;top:345px;width:37px;height:17px;background:#99CCFF;border-right:1px solid #E6F2FF;border-bottom:1px solid #E6F2FF"></div>
<div style="left:700px;top:345px;width:37px;height:17px;background:#99CCFF;border-right:1px solid #E6F2FF;border-bottom:1px solid #E6F2FF"></div>
<div style="left:737px;top:345px;width:37px;height:17px;background:#99CCFF;border-right:1px solid #E6F2FF;border-bottom:1px solid #E6F2FF"></div>
<div style="left:774px;top:345px;width:42px;height:17px;background:#99CCFF;border-right:1px solid #E6F2FF;border-bottom:1px solid #E6F2FF"></div>
<div class="v r" style="left:28px;top:362px;width:31px;height:18px;border:1px solid #4A4A4A;font-size:13px;line-height:17px;color:#333;background:#fff;padding-right:2px">6</div>
<div class="v" style="left:58px;top:362px;width:89px;height:18px;border:1px solid #4A4A4A;font-size:13px;line-height:17px;color:#333;background:#fff;padding-left:2px">Deluxe</div>
<div class="v c" style="left:146px;top:362px;width:104px;height:18px;border:1px solid #4A4A4A;font-size:13px;line-height:17px;color:#333;background:#fff;">712</div>
<div style="left:256px;top:362px;width:37px;height:17px;background:#99CCFF;border-right:1px solid #E6F2FF;border-bottom:1px solid #E6F2FF"></div>
<div style="left:293px;top:362px;width:37px;height:17px;background:#99CCFF;border-right:1px solid #E6F2FF;border-bottom:1px solid #E6F2FF"></div>
<div style="left:330px;top:362px;width:37px;height:17px;background:#99CCFF;border-right:1px solid #E6F2FF;border-bottom:1px solid #E6F2FF"></div>
<div style="left:367px;top:362px;width:37px;height:17px;background:#99CCFF;border-right:1px solid #E6F2FF;border-bottom:1px solid #E6F2FF"></div>
<div style="left:404px;top:362px;width:37px;height:17px;background:#99CCFF;border-right:1px solid #E6F2FF;border-bottom:1px solid #E6F2FF"></div>
<div style="left:441px;top:362px;width:37px;height:17px;background:#99CCFF;border-right:1px solid #E6F2FF;border-bottom:1px solid #E6F2FF"></div>
<div style="left:478px;top:362px;width:37px;height:17px;background:#99CCFF;border-right:1px solid #E6F2FF;border-bottom:1px solid #E6F2FF"></div>
<div style="left:515px;top:362px;width:37px;height:17px;background:#99CCFF;border-right:1px solid #E6F2FF;border-bottom:1px solid #E6F2FF"></div>
<div style="left:552px;top:362px;width:37px;height:17px;background:#99CCFF;border-right:1px solid #E6F2FF;border-bottom:1px solid #E6F2FF"></div>
<div style="left:589px;top:362px;width:37px;height:17px;background:#99CCFF;border-right:1px solid #E6F2FF;border-bottom:1px solid #E6F2FF"></div>
<div style="left:626px;top:362px;width:37px;height:17px;background:#99CCFF;border-right:1px solid #E6F2FF;border-bottom:1px solid #E6F2FF"></div>
<div style="left:663px;top:362px;width:37px;height:17px;background:#99CCFF;border-right:1px solid #E6F2FF;border-bottom:1px solid #E6F2FF"></div>
<div style="left:700px;top:362px;width:37px;height:17px;background:#99CCFF;border-right:1px solid #E6F2FF;border-bottom:1px solid #E6F2FF"></div>
<div style="left:737px;top:362px;width:37px;height:17px;background:#99CCFF;border-right:1px solid #E6F2FF;border-bottom:1px solid #E6F2FF"></div>
<div style="left:774px;top:362px;width:42px;height:17px;background:#99CCFF;border-right:1px solid #E6F2FF;border-bottom:1px solid #E6F2FF"></div>
<div class="v r" style="left:28px;top:379px;width:31px;height:18px;border:1px solid #4A4A4A;font-size:13px;line-height:17px;color:#333;background:#fff;padding-right:2px">7</div>
<div class="v" style="left:58px;top:379px;width:89px;height:18px;border:1px solid #4A4A4A;font-size:13px;line-height:17px;color:#333;background:#fff;padding-left:2px">Deluxe</div>
<div class="v c" style="left:146px;top:379px;width:104px;height:18px;border:1px solid #4A4A4A;font-size:13px;line-height:17px;color:#333;background:#fff;">713</div>
<div style="left:256px;top:379px;width:37px;height:17px;background:#99CCFF;border-right:1px solid #E6F2FF;border-bottom:1px solid #E6F2FF"></div>
<div style="left:293px;top:379px;width:37px;height:17px;background:#99CCFF;border-right:1px solid #E6F2FF;border-bottom:1px solid #E6F2FF"></div>
<div style="left:330px;top:379px;width:37px;height:17px;background:#99CCFF;border-right:1px solid #E6F2FF;border-bottom:1px solid #E6F2FF"></div>
<div style="left:367px;top:379px;width:37px;height:17px;background:#99CCFF;border-right:1px solid #E6F2FF;border-bottom:1px solid #E6F2FF"></div>
<div style="left:404px;top:379px;width:37px;height:17px;background:#99CCFF;border-right:1px solid #E6F2FF;border-bottom:1px solid #E6F2FF"></div>
<div style="left:441px;top:379px;width:37px;height:17px;background:#99CCFF;border-right:1px solid #E6F2FF;border-bottom:1px solid #E6F2FF"></div>
<div style="left:478px;top:379px;width:37px;height:17px;background:#99CCFF;border-right:1px solid #E6F2FF;border-bottom:1px solid #E6F2FF"></div>
<div style="left:515px;top:379px;width:37px;height:17px;background:#99CCFF;border-right:1px solid #E6F2FF;border-bottom:1px solid #E6F2FF"></div>
<div style="left:552px;top:379px;width:37px;height:17px;background:#99CCFF;border-right:1px solid #E6F2FF;border-bottom:1px solid #E6F2FF"></div>
<div style="left:589px;top:379px;width:37px;height:17px;background:#99CCFF;border-right:1px solid #E6F2FF;border-bottom:1px solid #E6F2FF"></div>
<div style="left:626px;top:379px;width:37px;height:17px;background:#99CCFF;border-right:1px solid #E6F2FF;border-bottom:1px solid #E6F2FF"></div>
<div style="left:663px;top:379px;width:37px;height:17px;background:#99CCFF;border-right:1px solid #E6F2FF;border-bottom:1px solid #E6F2FF"></div>
<div style="left:700px;top:379px;width:37px;height:17px;background:#99CCFF;border-right:1px solid #E6F2FF;border-bottom:1px solid #E6F2FF"></div>
<div style="left:737px;top:379px;width:37px;height:17px;background:#99CCFF;border-right:1px solid #E6F2FF;border-bottom:1px solid #E6F2FF"></div>
<div style="left:774px;top:379px;width:42px;height:17px;background:#99CCFF;border-right:1px solid #E6F2FF;border-bottom:1px solid #E6F2FF"></div>
<div class="v r" style="left:28px;top:396px;width:31px;height:18px;border:1px solid #4A4A4A;font-size:13px;line-height:17px;color:#333;background:#fff;padding-right:2px">8</div>
<div class="v" style="left:58px;top:396px;width:89px;height:18px;border:1px solid #4A4A4A;font-size:13px;line-height:17px;color:#333;background:#fff;padding-left:2px">Superior</div>
<div class="v c" style="left:146px;top:396px;width:104px;height:18px;border:1px solid #4A4A4A;font-size:13px;line-height:17px;color:#333;background:#fff;">821</div>
<div style="left:256px;top:396px;width:37px;height:17px;background:#99CCFF;border-right:1px solid #E6F2FF;border-bottom:1px solid #E6F2FF"></div>
<div style="left:293px;top:396px;width:37px;height:17px;background:#99CCFF;border-right:1px solid #E6F2FF;border-bottom:1px solid #E6F2FF"></div>
<div style="left:330px;top:396px;width:37px;height:17px;background:#99CCFF;border-right:1px solid #E6F2FF;border-bottom:1px solid #E6F2FF"></div>
<div style="left:367px;top:396px;width:37px;height:17px;background:#99CCFF;border-right:1px solid #E6F2FF;border-bottom:1px solid #E6F2FF"></div>
<div style="left:404px;top:396px;width:37px;height:17px;background:#99CCFF;border-right:1px solid #E6F2FF;border-bottom:1px solid #E6F2FF"></div>
<div style="left:441px;top:396px;width:37px;height:17px;background:#99CCFF;border-right:1px solid #E6F2FF;border-bottom:1px solid #E6F2FF"></div>
<div style="left:478px;top:396px;width:37px;height:17px;background:#99CCFF;border-right:1px solid #E6F2FF;border-bottom:1px solid #E6F2FF"></div>
<div style="left:515px;top:396px;width:37px;height:17px;background:#99CCFF;border-right:1px solid #E6F2FF;border-bottom:1px solid #E6F2FF"></div>
<div style="left:552px;top:396px;width:37px;height:17px;background:#99CCFF;border-right:1px solid #E6F2FF;border-bottom:1px solid #E6F2FF"></div>
<div style="left:589px;top:396px;width:37px;height:17px;background:#99CCFF;border-right:1px solid #E6F2FF;border-bottom:1px solid #E6F2FF"></div>
<div style="left:626px;top:396px;width:37px;height:17px;background:#99CCFF;border-right:1px solid #E6F2FF;border-bottom:1px solid #E6F2FF"></div>
<div style="left:663px;top:396px;width:37px;height:17px;background:#99CCFF;border-right:1px solid #E6F2FF;border-bottom:1px solid #E6F2FF"></div>
<div style="left:700px;top:396px;width:37px;height:17px;background:#99CCFF;border-right:1px solid #E6F2FF;border-bottom:1px solid #E6F2FF"></div>
<div style="left:737px;top:396px;width:37px;height:17px;background:#99CCFF;border-right:1px solid #E6F2FF;border-bottom:1px solid #E6F2FF"></div>
<div style="left:774px;top:396px;width:42px;height:17px;background:#99CCFF;border-right:1px solid #E6F2FF;border-bottom:1px solid #E6F2FF"></div>
<div class="v r" style="left:28px;top:413px;width:31px;height:18px;border:1px solid #4A4A4A;font-size:13px;line-height:17px;color:#333;background:#fff;padding-right:2px">9</div>
<div class="v" style="left:58px;top:413px;width:89px;height:18px;border:1px solid #4A4A4A;font-size:13px;line-height:17px;color:#333;background:#fff;padding-left:2px">Superior</div>
<div class="v c" style="left:146px;top:413px;width:104px;height:18px;border:1px solid #4A4A4A;font-size:13px;line-height:17px;color:#333;background:#fff;">822</div>
<div style="left:256px;top:413px;width:37px;height:17px;background:#99CCFF;border-right:1px solid #E6F2FF;border-bottom:1px solid #E6F2FF"></div>
<div style="left:293px;top:413px;width:37px;height:17px;background:#99CCFF;border-right:1px solid #E6F2FF;border-bottom:1px solid #E6F2FF"></div>
<div style="left:330px;top:413px;width:37px;height:17px;background:#99CCFF;border-right:1px solid #E6F2FF;border-bottom:1px solid #E6F2FF"></div>
<div style="left:367px;top:413px;width:37px;height:17px;background:#99CCFF;border-right:1px solid #E6F2FF;border-bottom:1px solid #E6F2FF"></div>
<div style="left:404px;top:413px;width:37px;height:17px;background:#99CCFF;border-right:1px solid #E6F2FF;border-bottom:1px solid #E6F2FF"></div>
<div style="left:441px;top:413px;width:37px;height:17px;background:#99CCFF;border-right:1px solid #E6F2FF;border-bottom:1px solid #E6F2FF"></div>
<div style="left:478px;top:413px;width:37px;height:17px;background:#99CCFF;border-right:1px solid #E6F2FF;border-bottom:1px solid #E6F2FF"></div>
<div style="left:515px;top:413px;width:37px;height:17px;background:#99CCFF;border-right:1px solid #E6F2FF;border-bottom:1px solid #E6F2FF"></div>
<div style="left:552px;top:413px;width:37px;height:17px;background:#99CCFF;border-right:1px solid #E6F2FF;border-bottom:1px solid #E6F2FF"></div>
<div style="left:589px;top:413px;width:37px;height:17px;background:#99CCFF;border-right:1px solid #E6F2FF;border-bottom:1px solid #E6F2FF"></div>
<div style="left:626px;top:413px;width:37px;height:17px;background:#99CCFF;border-right:1px solid #E6F2FF;border-bottom:1px solid #E6F2FF"></div>
<div style="left:663px;top:413px;width:37px;height:17px;background:#99CCFF;border-right:1px solid #E6F2FF;border-bottom:1px solid #E6F2FF"></div>
<div style="left:700px;top:413px;width:37px;height:17px;background:#99CCFF;border-right:1px solid #E6F2FF;border-bottom:1px solid #E6F2FF"></div>
<div style="left:737px;top:413px;width:37px;height:17px;background:#99CCFF;border-right:1px solid #E6F2FF;border-bottom:1px solid #E6F2FF"></div>
<div style="left:774px;top:413px;width:42px;height:17px;background:#99CCFF;border-right:1px solid #E6F2FF;border-bottom:1px solid #E6F2FF"></div>
<div class="v r" style="left:28px;top:430px;width:31px;height:18px;border:1px solid #4A4A4A;font-size:13px;line-height:17px;color:#333;background:#fff;padding-right:2px">10</div>
<div class="v" style="left:58px;top:430px;width:89px;height:18px;border:1px solid #4A4A4A;font-size:13px;line-height:17px;color:#333;background:#fff;padding-left:2px">Suite</div>
<div class="v c" style="left:146px;top:430px;width:104px;height:18px;border:1px solid #4A4A4A;font-size:13px;line-height:17px;color:#333;background:#fff;">931</div>
<div style="left:256px;top:430px;width:37px;height:17px;background:#99CCFF;border-right:1px solid #E6F2FF;border-bottom:1px solid #E6F2FF"></div>
<div style="left:293px;top:430px;width:37px;height:17px;background:#99CCFF;border-right:1px solid #E6F2FF;border-bottom:1px solid #E6F2FF"></div>
<div style="left:330px;top:430px;width:37px;height:17px;background:#FF0000;border-right:1px solid #E6F2FF;border-bottom:1px solid #E6F2FF"></div>
<div style="left:367px;top:430px;width:37px;height:17px;background:#FF0000;border-right:1px solid #E6F2FF;border-bottom:1px solid #E6F2FF"></div>
<div style="left:404px;top:430px;width:37px;height:17px;background:#FF0000;border-right:1px solid #E6F2FF;border-bottom:1px solid #E6F2FF"></div>
<div style="left:441px;top:430px;width:37px;height:17px;background:#FF0000;border-right:1px solid #E6F2FF;border-bottom:1px solid #E6F2FF"></div>
<div style="left:478px;top:430px;width:37px;height:17px;background:#99CCFF;border-right:1px solid #E6F2FF;border-bottom:1px solid #E6F2FF"></div>
<div style="left:515px;top:430px;width:37px;height:17px;background:#99CCFF;border-right:1px solid #E6F2FF;border-bottom:1px solid #E6F2FF"></div>
<div style="left:552px;top:430px;width:37px;height:17px;background:#99CCFF;border-right:1px solid #E6F2FF;border-bottom:1px solid #E6F2FF"></div>
<div style="left:589px;top:430px;width:37px;height:17px;background:#99CCFF;border-right:1px solid #E6F2FF;border-bottom:1px solid #E6F2FF"></div>
<div style="left:626px;top:430px;width:37px;height:17px;background:#99CCFF;border-right:1px solid #E6F2FF;border-bottom:1px solid #E6F2FF"></div>
<div style="left:663px;top:430px;width:37px;height:17px;background:#99CCFF;border-right:1px solid #E6F2FF;border-bottom:1px solid #E6F2FF"></div>
<div style="left:700px;top:430px;width:37px;height:17px;background:#99CCFF;border-right:1px solid #E6F2FF;border-bottom:1px solid #E6F2FF"></div>
<div style="left:737px;top:430px;width:37px;height:17px;background:#99CCFF;border-right:1px solid #E6F2FF;border-bottom:1px solid #E6F2FF"></div>
<div style="left:774px;top:430px;width:42px;height:17px;background:#99CCFF;border-right:1px solid #E6F2FF;border-bottom:1px solid #E6F2FF"></div>
<div style="left:57px;top:242px;width:2px;height:206px;background:#444"></div>
<div style="left:880px;top:276.5px;width:42px;height:18px;background:#99CCFF"></div>
<div class="v" style="left:929px;top:276.5px;width:200px;height:18px;font-size:13px;line-height:18px;letter-spacing:-0.1px;color:#333">Available</div>
<div style="left:880px;top:310.5px;width:42px;height:18px;background:#FF0000"></div>
<div class="v" style="left:929px;top:310.5px;width:200px;height:18px;font-size:13px;line-height:18px;letter-spacing:-0.1px;color:#333">Not Available</div>
<div style="left:880px;top:344.5px;width:42px;height:18px;background:#FFFF00"></div>
<div class="v" style="left:929px;top:344.5px;width:200px;height:18px;font-size:13px;line-height:18px;letter-spacing:-0.1px;color:#333">Double Reservation</div>
<div style="left:1135px;top:120px;width:17px;height:680px;background:#F4F3EE;border-left:1px solid #E0DDD0"></div>
<div style="left:1135px;top:120px;width:17px;height:7px;background:#ECE9D8;border:1px solid #fff;border-bottom:2px solid #555"></div>
<div style="left:1135px;top:127px;width:17px;height:17px;background:#ECE9D8;border:1px solid #fff;border-right:1px solid #716F64;border-bottom:1px solid #716F64;font-size:10px;line-height:15px;text-align:center;overflow:hidden">&#9650;</div>
<div style="left:1135px;top:144px;width:17px;height:639px;background:linear-gradient(90deg,#F7F6F0,#EBE8DB);border-left:1px solid #fff;border-right:1px solid #8A887C"></div>
<div style="left:1135px;top:783px;width:17px;height:17px;background:#ECE9D8;border:1px solid #fff;border-right:1px solid #716F64;border-bottom:1px solid #716F64;font-size:10px;line-height:15px;text-align:center;overflow:hidden">&#9660;</div>
<div style="left:0px;top:118.5px;width:1152px;height:1.5px;background:#A5A293"></div>
<div style="left:0px;top:119px;width:2px;height:682px;background:linear-gradient(90deg,#96947F,#C9C7B8)"></div>
<div style="left:0px;top:800px;width:1152px;height:19px;background:#ECE9D8;border-top:1px solid #B5B2A3"></div>
<div style="left:2.0px;top:803px;width:12px;height:12px;font-size:8px;line-height:12px;text-align:center">&#9664;</div>
<div style="left:18.5px;top:803px;width:12px;height:12px;font-size:8px;line-height:12px;text-align:center">&#9664;</div>
<div style="left:35.0px;top:803px;width:12px;height:12px;font-size:8px;line-height:12px;text-align:center">&#9654;</div>
<div style="left:51.5px;top:803px;width:12px;height:12px;font-size:8px;line-height:12px;text-align:center">&#9654;</div>
<div style="left:4px;top:804px;width:1px;height:9px;background:#000"></div>
<div style="left:61px;top:804px;width:1px;height:9px;background:#000"></div>
<div style="left:76px;top:801px;width:112px;height:16px;font-size:11px;line-height:15px;text-align:center;color:#222;letter-spacing:0.4px;border-bottom:1px solid #555">Room Reservation</div>
<div style="left:70px;top:800px;width:1px;height:17px;background:#333;transform:skewX(24deg)"></div>
<div style="left:193px;top:800px;width:1px;height:17px;background:#333;transform:skewX(-20deg)"></div>
<div style="left:199px;top:800px;width:72px;height:16px;background:#EFEDE2;font-size:11px;line-height:15px;font-weight:bold;text-align:center;letter-spacing:0.6px;border-bottom:1px solid #333">Availability</div>
<div style="left:196px;top:800px;width:8px;height:16px;background:#EFEDE2;transform:skewX(20deg)"></div>
<div style="left:267px;top:800px;width:8px;height:16px;background:#EFEDE2;transform:skewX(-20deg)"></div>
<div style="left:195px;top:800px;width:1px;height:17px;background:#333;transform:skewX(20deg)"></div>
<div style="left:275px;top:800px;width:1px;height:17px;background:#333;transform:skewX(-20deg)"></div>
<div style="left:682px;top:802px;width:4px;height:15px;background:#ECE9D8;border:1px solid #fff;border-right:1px solid #555;border-bottom:1px solid #555"></div>
<div style="left:686px;top:801px;width:449px;height:16px;background:#F4F3EE"></div>
<div style="left:686px;top:801px;width:17px;height:16px;background:#ECE9D8;border:1px solid #fff;border-right:1px solid #716F64;border-bottom:1px solid #716F64;font-size:10px;line-height:14px;text-align:center;overflow:hidden">&#9664;</div>
<div style="left:703px;top:801px;width:391px;height:16px;background:linear-gradient(#F7F6F0,#EBE8DB);border-top:1px solid #fff;border-left:1px solid #fff;border-bottom:1px solid #8A887C;border-right:1px solid #8A887C"></div>
<div style="left:1118px;top:801px;width:17px;height:16px;background:#ECE9D8;border:1px solid #fff;border-right:1px solid #716F64;border-bottom:1px solid #716F64;font-size:10px;line-height:14px;text-align:center;overflow:hidden">&#9654;</div>
<div style="left:1135px;top:801px;width:17px;height:16px;background:#ECE9D8"></div>
<div style="left:1137px;top:802px;width:15px;height:15px;border-left:1px solid #666;border-top:1px solid #666;background:#F2F0E6"></div>
<div style="left:0px;top:818.5px;width:1152px;height:26px;background:#ECE9D8;border-top:1px solid #fff"></div>
<div class="grip" style="left:3px;top:822.5px;width:3px;height:18px;"></div>
<div style="left:10px;top:824.5px;width:40px;height:15px;font-size:11px;line-height:15px">D<u>r</u>aw</div>
<div style="left:37px;top:829.5px;width:7px;height:7px;font-size:7px;line-height:7px;color:#000">&#9660;</div>
<svg style="position:absolute;left:51px;top:823.5px" width="16" height="16" viewBox="0 0 16 16"><path d="M4.500 1.500v11l2.500-2.500 2 4.500 2-1-2-4.500h3.500z" fill="#fff" stroke="#333"/></svg>
<div class="sep" style="left:72px;top:822.5px;width:1px;height:18px;"></div>
<div style="left:80px;top:824.5px;width:70px;height:15px;font-size:11px;line-height:15px">A<u>u</u>toShapes</div>
<div style="left:140px;top:829.5px;width:7px;height:7px;font-size:7px;line-height:7px;color:#000">&#9660;</div>
<div style="left:160px;top:825.5px;width:14px;height:14px;border-top:1px solid #999;transform:rotate(40deg);transform-origin:0 0;height:1px;width:17px"></div>
<div style="left:180px;top:825.5px;width:14px;height:14px;border-top:1px solid #333;transform:rotate(40deg);transform-origin:0 0;height:1px;width:17px"></div>
<div style="left:190px;top:834.5px;width:4px;height:4px;background:#111"></div>
<div style="left:200px;top:825.5px;width:17px;height:13px;border:1px solid #222"></div>
<div style="left:223px;top:825.5px;width:17px;height:13px;border:1px solid #222;border-radius:50%"></div>
<div style="left:246px;top:824.5px;width:16px;height:15px;border:1px solid #555;background:#B8B8B8"></div>
<div style="left:249px;top:827.5px;width:10px;height:9px;font-size:8px;line-height:9px;color:#fff">A</div>
<div style="left:267px;top:822.5px;width:18px;height:18px;font-size:17px;line-height:18px;font-weight:bold;font-style:italic;color:#1A3FCF;text-align:center">A</div>
<div style="left:293px;top:824.5px;width:14px;height:14px;border:2px dotted #2A4FBF;border-radius:50%"></div>
<div style="left:297px;top:828.5px;width:6px;height:6px;background:#C33;border-radius:50%"></div>
<div style="left:318px;top:823.5px;width:14px;height:16px;background:#fff;border:1px solid #555"></div>
<div style="left:322px;top:827.5px;width:7px;height:8px;background:#C0392B"></div>
<div style="left:339px;top:824.5px;width:16px;height:14px;background:#E8D030;border:1px solid #444"></div>
<div style="left:343px;top:828.5px;width:8px;height:7px;background:#3A5FBF"></div>
<div class="sep" style="left:364px;top:822.5px;width:1px;height:18px;"></div>
<div style="left:371px;top:824.5px;width:13px;height:9px;background:#C9B458;border:1px solid #665;transform:rotate(-30deg)"></div>
<div style="left:369px;top:836.5px;width:16px;height:4px;background:#FFFF00"></div>
<div style="left:391px;top:829.5px;width:7px;height:7px;font-size:7px;line-height:7px;color:#000">&#9660;</div>
<div style="left:402px;top:824.5px;width:14px;height:9px;background:#3A5FBF;transform:rotate(-35deg)"></div>
<div style="left:401px;top:836.5px;width:16px;height:4px;background:#0000FF"></div>
<div style="left:423px;top:829.5px;width:7px;height:7px;font-size:7px;line-height:7px;color:#000">&#9660;</div>
<div style="left:432px;top:820.5px;width:18px;height:18px;font-size:15px;line-height:17px;font-weight:bold;text-align:center;color:#1A2FAF">A</div>
<div style="left:433px;top:836.5px;width:16px;height:4px;background:#FF0000"></div>
<div style="left:455px;top:829.5px;width:7px;height:7px;font-size:7px;line-height:7px;color:#000">&#9660;</div>
<div style="left:468px;top:826.5px;width:16px;height:1px;background:#222"></div>
<div style="left:468px;top:828.5px;width:0px;height:1px;background:#222"></div>
<div style="left:468px;top:830.5px;width:16px;height:1px;background:#222"></div>
<div style="left:468px;top:832.5px;width:16px;height:1px;background:#222"></div>
<div style="left:468px;top:834.5px;width:0px;height:1px;background:#222"></div>
<div style="left:468px;top:836.5px;width:16px;height:1px;background:#222"></div>
<div style="left:468px;top:838.5px;width:16px;height:1px;background:#222"></div>
<div style="left:491px;top:826.5px;width:16px;height:1px;background:#999"></div>
<div style="left:491px;top:828.5px;width:0px;height:1px;background:#999"></div>
<div style="left:491px;top:830.5px;width:0px;height:1px;background:#999"></div>
<div style="left:491px;top:832.5px;width:16px;height:1px;background:#999"></div>
<div style="left:491px;top:834.5px;width:0px;height:1px;background:#999"></div>
<div style="left:491px;top:836.5px;width:0px;height:1px;background:#999"></div>
<div style="left:491px;top:838.5px;width:16px;height:1px;background:#999"></div>
<div style="left:515px;top:826.5px;width:16px;height:1px;background:#222"></div>
<div style="left:515px;top:828.5px;width:0px;height:1px;background:#222"></div>
<div style="left:515px;top:830.5px;width:0px;height:1px;background:#222"></div>
<div style="left:515px;top:832.5px;width:16px;height:1px;background:#222"></div>
<div style="left:515px;top:834.5px;width:0px;height:1px;background:#222"></div>
<div style="left:515px;top:836.5px;width:0px;height:1px;background:#222"></div>
<div style="left:515px;top:838.5px;width:16px;height:1px;background:#222"></div>
<div style="left:539px;top:824.5px;width:13px;height:13px;background:#2A9090;border:1px solid #145;box-shadow:2px 2px 0 #555"></div>
<div style="left:563px;top:824.5px;width:14px;height:14px;background:#4AA8A8;border:1px solid #256;box-shadow:-2px 2px 0 #9CC"></div>
<div style="left:587px;top:833.5px;width:7px;height:7px;font-size:7px;line-height:7px;color:#000">&#9660;</div>
<div style="left:598px;top:821.5px;width:1px;height:22px;background:#D8D5C6"></div>
<div style="left:0px;top:844px;width:1152px;height:22px;background:#ECE9D8;border-top:1px solid #B3B0A1"></div>
<div style="left:0px;top:845px;width:1152px;height:1px;background:#fff"></div>
<div style="left:4px;top:848px;width:60px;height:15px;font-size:11px;line-height:15px">Ready</div>
<div style="left:1047px;top:848px;width:40px;height:15px;font-size:11px;line-height:15px;color:#444">NUM</div>
<div style="left:0px;top:861.5px;width:1152px;height:3px;background:linear-gradient(#7FA8E8,#2A64D8)"></div>
</div></body></html>
